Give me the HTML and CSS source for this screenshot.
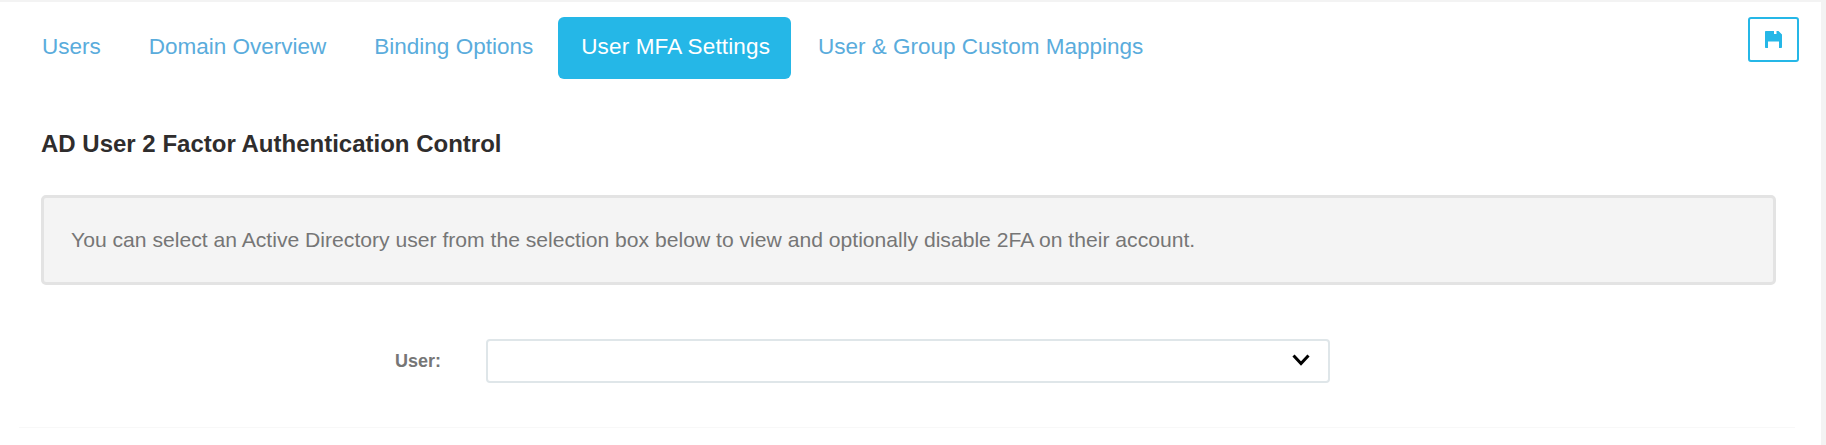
FILE: index.html
```html
<!DOCTYPE html>
<html lang="en">
<head>
<meta charset="utf-8">
<title>User MFA Settings</title>
<link rel="stylesheet" href="styles.css">
</head>
<body>
<main class="panel">
  <div class="topbar">
    <nav class="tabs">
      <a class="tab" href="#">Users</a>
      <a class="tab" href="#">Domain Overview</a>
      <a class="tab" href="#">Binding Options</a>
      <a class="tab active" href="#">User MFA Settings</a>
      <a class="tab" href="#">User &amp; Group Custom Mappings</a>
    </nav>
    <button class="save" type="button" aria-label="Save">
      <svg width="17" height="17" viewBox="0 0 17 17"><path fill="#25b7e7" fill-rule="evenodd" d="M1 0h12.500L17 3.500V16c0 .6-.4 1-1 1h-2v-6.500H3V17H1c-.6 0-1-.4-1-1V1c0-.6.4-1 1-1zM9 0v3h2.500V0z"/></svg>
    </button>
  </div>
  <h2 class="title">AD User 2 Factor Authentication Control</h2>
  <div class="notice">You can select an Active Directory user from the selection box below to view and optionally disable 2FA on their account.</div>
  <div class="field">
    <label class="label" for="user">User:</label>
    <div class="select-wrap">
      <select class="select" id="user"><option></option></select>
      <svg class="chevron" width="18" height="12" viewBox="0 0 18 12"><path fill="none" stroke="#000" stroke-width="3" d="M1.500 1.500 9 9.500l7.500-8"/></svg>
    </div>
  </div>
  <div class="rule"></div>
</main>
</body>
</html>
```
FILE: styles.css
```css
* { box-sizing: border-box; }
html, body { height: 100%; }
body {
  margin: 0;
  padding: 2px 5px 0 0;
  background: #f3f3f3;
  font-family: "Liberation Sans", Arial, sans-serif;
  overflow: hidden;
}
.panel {
  height: 443px;
  background: #fff;
  padding: 15px 0 0 20px;
}
.topbar {
  display: flex;
  justify-content: space-between;
  align-items: flex-start;
  padding-right: 22px;
}
.tabs { display: flex; gap: 4px; }
.tab {
  display: block;
  height: 62px;
  padding: 0 22px;
  border-radius: 6px;
  font-size: 22.5px;
  line-height: 60px;
  color: #5aacdc;
  text-decoration: none;
}
.tab.active {
  margin: 0 1px 0 -1px;
  padding: 0 21px 0 23px;
  background: #25b7e7;
  color: #fff;
  letter-spacing: 0.15px;
}
.save {
  width: 51px;
  height: 45px;
  padding: 0;
  display: flex;
  align-items: center;
  justify-content: center;
  background: #fff;
  border: 2px solid #25b7e7;
  border-radius: 3px;
}
.title {
  margin: 50px 0 0 21px;
  font-size: 24px;
  line-height: 30px;
  font-weight: 700;
  color: #2f2d2d;
}
.notice {
  width: 1735px;
  height: 90px;
  margin: 36px 0 0 21px;
  padding: 0 27px;
  background: #f4f4f4;
  border: 3px solid #e3e3e3;
  border-radius: 5px;
  font-size: 21.13px;
  line-height: 84px;
  color: #767676;
}
.field {
  display: flex;
  align-items: center;
  margin: 54px 0 0 0;
}
.label {
  width: 421px;
  text-align: right;
  font-size: 18px;
  font-weight: 700;
  color: #767676;
}
.select-wrap {
  position: relative;
  width: 844px;
  height: 44px;
  margin-left: 45px;
}
.select {
  display: block;
  width: 100%;
  height: 100%;
  appearance: none;
  background: #fff;
  border: 2px solid #dfe6e9;
  border-radius: 4px;
}
.chevron {
  position: absolute;
  right: 20px;
  top: 15px;
}
.rule {
  width: 1776px;
  height: 1px;
  margin: 44px 0 0 -1px;
  background: #f8f8f8;
}
```
